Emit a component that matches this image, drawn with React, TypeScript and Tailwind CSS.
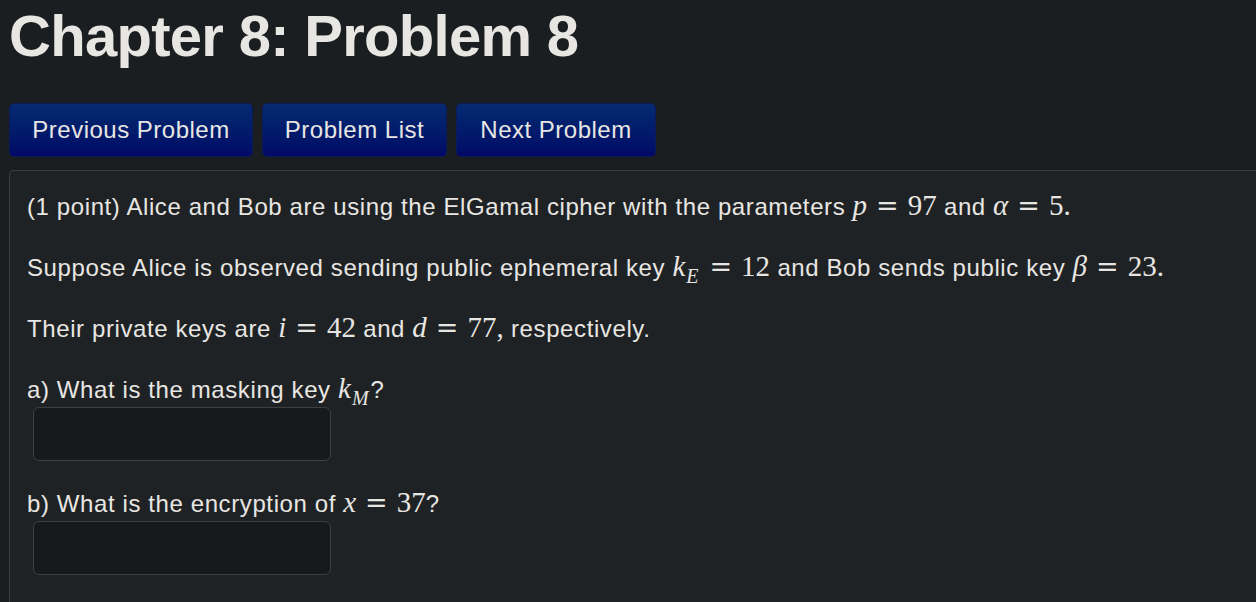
import React from 'react';

const sans = { fontFamily: '"Liberation Sans", Arial, sans-serif' };

const V: React.FC<{ children: React.ReactNode }> = ({ children }) => (
  <span className="italic">{children}</span>
);

const M: React.FC<{ children: React.ReactNode }> = ({ children }) => (
  <span className="font-['Liberation_Serif',serif] text-[29px] leading-[0] tracking-normal">{children}</span>
);

const Eq = () => (
  <span className="mx-[9px] font-['DejaVu_Serif',serif] text-[27px] leading-[0]">=</span>
);

const Sub: React.FC<{ children: React.ReactNode }> = ({ children }) => (
  <span className="relative top-[7px] ml-[1px] mr-[2px] text-[20px] italic leading-[0]">{children}</span>
);

const AnswerBox = () => (
  <input
    type="text"
    className="ml-[6px] block h-[54px] w-[298px] rounded-[6px] border border-[#3d4042] bg-[#17191b] outline-none"
  />
);

export default function App() {
  const buttons = [
    { label: 'Previous Problem', w: 'w-[244px]' },
    { label: 'Problem List', w: 'w-[185px]' },
    { label: 'Next Problem', w: 'w-[200px]' },
  ];

  return (
    <div className="h-[602px] overflow-hidden bg-[#1b1e20] pl-[9px] text-[#e8e6e3]" style={sans}>
      <h1 className="pt-[4px] text-[58px] font-bold leading-[64px] tracking-[-0.7px] text-[#e8e6e3]">
        Chapter 8: Problem 8
      </h1>

      <div className="mt-[35px] flex gap-[9px]">
        {buttons.map((b) => (
          <button
            key={b.label}
            className={`${b.w} h-[54px] rounded-[5px] border border-[#0b1a5a] bg-gradient-to-b from-[#062a70] to-[#020866] text-[24px] tracking-[0.5px] text-[#e8e6e3]`}
          >
            {b.label}
          </button>
        ))}
      </div>

      <div className="mt-[13px] h-[460px] w-[1270px] rounded-tl-[4px] border border-[#3b3e40] bg-[#1f2224] pl-[17px] pt-[22px] text-[24px] tracking-[0.6px]">
        <p className="leading-[28px]">
          (1 point) Alice and Bob are using the ElGamal cipher with the parameters{' '}
          <M>
            <V>p</V>
            <Eq />97
          </M>{' '}
          and{' '}
          <M>
            <V>α</V>
            <Eq />5.
          </M>
        </p>
        <p className="mt-[33px] leading-[28px]">
          Suppose Alice is observed sending public ephemeral key{' '}
          <M>
            <V>k</V>
            <Sub>E</Sub>
            <Eq />12
          </M>{' '}
          and Bob sends public key{' '}
          <M>
            <V>β</V>
            <Eq />23.
          </M>
        </p>
        <p className="mt-[33px] leading-[28px]">
          Their private keys are{' '}
          <M>
            <V>i</V>
            <Eq />42
          </M>{' '}
          and{' '}
          <M>
            <V>d</V>
            <Eq />77,
          </M>{' '}
          respectively.
        </p>
        <p className="mt-[33px] leading-[28px]">
          a) What is the masking key{' '}
          <M>
            <V>k</V>
            <Sub>M</Sub>
          </M>
          ?
        </p>
        <div className="mt-[3px]">
          <AnswerBox />
        </div>
        <p className="mt-[29px] leading-[28px]">
          b) What is the encryption of{' '}
          <M>
            <V>x</V>
            <Eq />37
          </M>
          ?
        </p>
        <div className="mt-[3px]">
          <AnswerBox />
        </div>
      </div>
    </div>
  );
}
